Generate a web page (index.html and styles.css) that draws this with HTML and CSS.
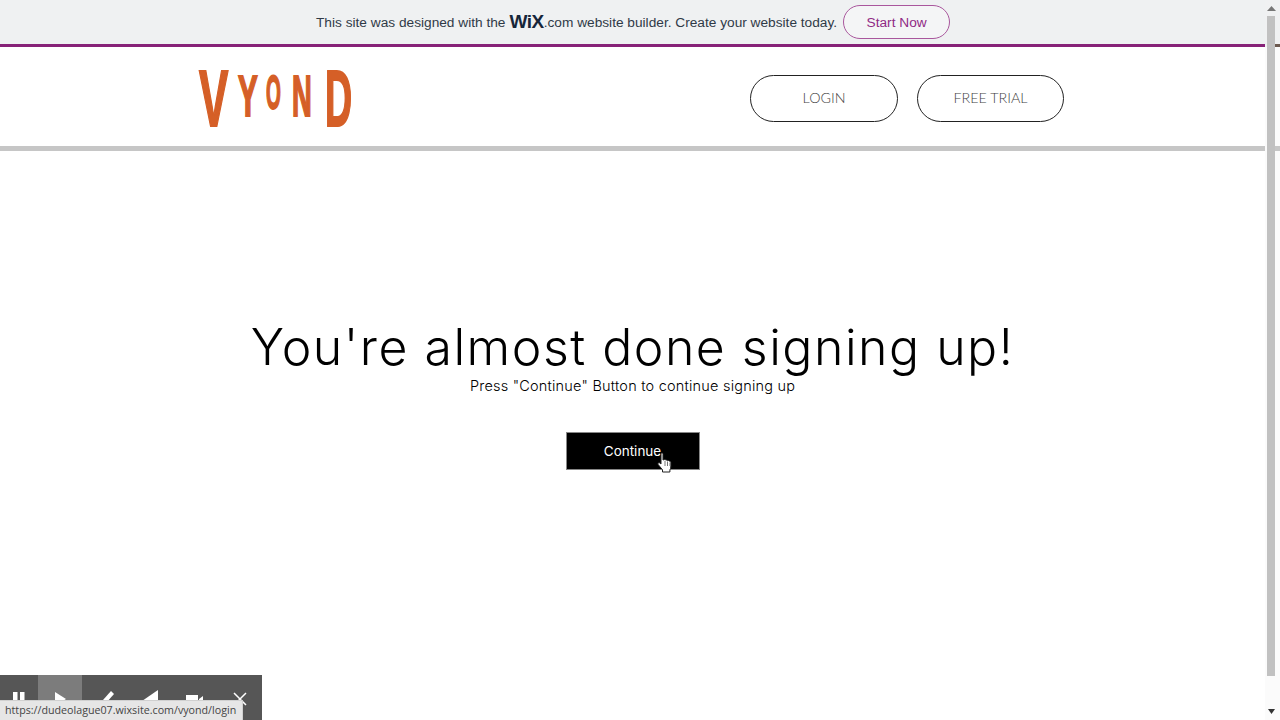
FILE: index.html
```html
<!DOCTYPE html>
<html lang="en">
<head>
    <meta charset="UTF-8">
    <meta name="viewport" content="width=device-width, initial-scale=1.0">
    <title>Vyond Login</title>
    <link rel="stylesheet" href="styles.css">
</head>
<body>
    <div class="page">
        <div class="wix-bar">
            <span>This site was designed with the</span>
            <b class="wix-logo">WiX</b><span class="wix-com">.com website builder. Create your website today.</span>
            <a class="start-btn">Start Now</a>
        </div>
        <header class="site-header">
            <div class="logo">
                <span class="logo-letter logo-v">V</span>
                <span class="logo-letter logo-y">Y</span>
                <span class="logo-letter logo-o">O</span>
                <span class="logo-letter logo-n">N</span>
                <span class="logo-letter logo-d">D</span>
            </div>
            <nav class="nav">
                <a class="pill pill-login">LOGIN</a>
                <a class="pill pill-trial">FREE TRIAL</a>
            </nav>
        </header>
        <main class="content">
            <h1>You're almost done signing up!</h1>
            <p>Press "Continue" Button to continue signing up</p>
            <a class="continue-btn">Continue
                <svg class="hand" width="16" height="21" viewBox="0 0 16 21">
                    <path d="M4 1.500c.9-.9 2-.4 2 .8V8l1.200-.4c.8-.3 1.500 0 1.700.5.700-.3 1.500-.1 1.800.5.700-.3 1.500 0 1.800.6.700-.1 1.300.3 1.300 1.100v4.700c0 1.200-.4 2-.9 2.800V20H5.500v-2.200L1.200 12.600c-.9-1.200.5-2.500 1.600-1.600L4 12V1.500z" fill="#fff" stroke="#222" stroke-width="1"/>
                    <path d="M8 9v5M10.500 9.500V14M13 10.500V14" stroke="#777" stroke-width="1" fill="none"/>
                </svg>
            </a>
        </main>
    </div>

    <div class="scrollbar">
        <span class="mark mark-purple"></span>
        <span class="mark mark-gray"></span>
        <svg class="arrow" width="9" height="5" viewBox="0 0 9 5"><path d="M4.500 0L9 5H0z" fill="#777"/></svg>
        <div class="thumb"></div>
        <svg class="arrow arrow-down" width="7" height="5" viewBox="0 0 7 5"><path d="M0 0h7L3.500 5z" fill="#333"/></svg>
    </div>

    <div class="recorder">
        <div class="tool tool-pause">
            <svg width="14" height="16" viewBox="0 0 14 16"><path d="M1 1h4.500v15H1zM8 1h4.500v15H8z" fill="#fff"/></svg>
        </div>
        <div class="tool tool-active">
            <svg width="12" height="16" viewBox="0 0 12 16"><path d="M1 1l11 7-11 7z" fill="#fff"/></svg>
        </div>
        <div class="tool tool-pencil">
            <svg width="14" height="16" viewBox="0 0 14 16"><path d="M11 0l3 3-8 9-4 1 1-4z" fill="#fff"/></svg>
        </div>
        <div class="tool tool-horn">
            <svg width="19" height="16" viewBox="0 0 19 16"><path d="M18 0v16H2v-5z" fill="#fff"/></svg>
        </div>
        <div class="tool tool-camera">
            <svg width="18" height="14" viewBox="0 0 18 14"><path d="M0 1h12v13H0zM13 5l4-3v12h-4z" fill="#fff"/></svg>
        </div>
        <div class="tool tool-close">
            <svg width="14" height="14" viewBox="0 0 14 14"><path d="M1 1l12 12M13 1L1 13" stroke="#fff" stroke-width="1.500"/></svg>
        </div>
        <div class="status-link">https://dudeolague07.wixsite.com/vyond/login</div>
    </div>
</body>
</html>
```

FILE: styles.css
```css
html, body {
    margin: 0;
    height: 100%;
    overflow: hidden;
}
body {
    font-family: "Liberation Sans", Arial, sans-serif;
    background-color: white;
    display: flex;
}
.page {
    width: 1265px;
    flex: none;
}
.wix-bar {
    height: 44px;
    background-color: #eff1f2;
    border-bottom: 3px solid #872278;
    display: flex;
    align-items: center;
    padding-left: 316px;
    font-size: 13.700px;
    color: #2f3a47;
}
.wix-bar > span:first-child {
    margin-right: 4px;
}
.wix-logo {
    font-size: 19px;
    font-weight: bold;
    color: #16263a;
    letter-spacing: -0.500px;
}
.start-btn {
    margin-left: 6px;
    width: 105px;
    height: 32px;
    border: 1px solid #a9579d;
    border-radius: 17px;
    display: flex;
    align-items: center;
    justify-content: center;
    color: #902a85;
    font-size: 13.700px;
    background-color: #f4f5f6;
}
.site-header {
    height: 99px;
    border-bottom: 5px solid #c6c6c6;
    display: flex;
    align-items: flex-start;
    justify-content: space-between;
    padding: 0 201px 0 199px;
}
.logo {
    display: flex;
    height: 80px;
    margin-top: 12px;
    color: #d55f27;
    font-weight: bold;
    -webkit-text-stroke: 2px #d55f27;
}
.logo-letter {
    display: block;
    transform-origin: left top;
    line-height: 1;
}
.logo-v {
    font-size: 80px;
    width: 39px;
    transform: scaleX(0.550);
}
.logo-y {
    font-size: 57px;
    width: 28px;
    margin-top: 9px;
    transform: scaleX(0.520);
}
.logo-o {
    font-size: 49px;
    width: 26px;
    margin-top: 9px;
    transform: scaleX(0.390);
}
.logo-n {
    font-size: 57px;
    width: 33px;
    margin-top: 9px;
    transform: scaleX(0.480);
}
.logo-d {
    font-size: 80px;
    width: 27px;
    transform: scaleX(0.470);
}
.nav {
    display: flex;
    gap: 19px;
    margin-top: 28px;
}
.pill {
    height: 43px;
    padding-bottom: 2px;
    border: 1px solid #222;
    border-radius: 24px;
    display: flex;
    align-items: center;
    justify-content: center;
    font-family: Lato, sans-serif;
    font-size: 14.300px;
    font-weight: 300;
    color: #444;
}
.pill-login {
    width: 146px;
}
.pill-trial {
    width: 145px;
}
.content {
    display: flex;
    flex-direction: column;
    align-items: center;
    padding-top: 167px;
}
.content h1 {
    margin: 0;
    font-family: Inter, sans-serif;
    font-size: 50px;
    font-weight: 300;
    line-height: 58px;
    letter-spacing: 1.500px;
    color: #000;
}
.content p {
    margin: 0;
    font-family: Inter, sans-serif;
    font-size: 14.500px;
    font-weight: 300;
    line-height: 20px;
    letter-spacing: 0.200px;
    color: #000;
}
.continue-btn {
    position: relative;
    margin-top: 36px;
    width: 132px;
    height: 36px;
    background-color: #000;
    border: 1px solid #888;
    display: flex;
    align-items: center;
    justify-content: center;
    color: white;
    font-family: Inter, sans-serif;
    font-size: 13.500px;
}
.hand {
    position: absolute;
    left: 90px;
    top: 19px;
}
.scrollbar {
    flex: 1;
    background: linear-gradient(#f0f1f2 47px, #fbfbfb 47px);
    display: flex;
    flex-direction: column;
    align-items: flex-start;
    padding-left: 2px;
    height: 720px;
    position: relative;
}
.mark {
    position: absolute;
    right: 0;
    width: 5px;
}
.mark-purple {
    top: 44px;
    height: 3px;
    background-color: #6d5a50;
}
.mark-gray {
    top: 146px;
    height: 5px;
    background-color: #c6c6c6;
}
.arrow {
    margin-top: 6px;
}
.thumb {
    margin-top: 5px;
    width: 8px;
    height: 660px;
    background-color: #c1c1c1;
}
.arrow-down {
    margin-top: 33px;
    margin-left: 1px;
}
.recorder {
    position: fixed;
    left: 0;
    bottom: 0;
    width: 262px;
    height: 45px;
    background-color: #565656;
    display: flex;
    align-items: flex-start;
    overflow: hidden;
}
.tool {
    width: 44px;
    height: 45px;
    display: flex;
    justify-content: center;
    padding-top: 16px;
    box-sizing: border-box;
}
.tool-pause {
    width: 38px;
}
.tool-active {
    background-color: #7c7c7c;
}
.tool-pencil svg {
    margin-left: 6px;
}
.tool-horn svg {
    margin-left: 2px;
    margin-top: -1px;
}
.tool-camera svg {
    margin-left: 6px;
    margin-top: 3px;
}
.tool-close svg {
    margin-left: 8px;
    margin-top: 1px;
}
.status-link {
    position: absolute;
    left: 0;
    bottom: 0;
    width: 243px;
    height: 20px;
    box-sizing: border-box;
    background-color: #e6e6e6;
    border-top: 1px solid #d0d0d0;
    border-right: 1px solid #d0d0d0;
    padding-left: 5px;
    font-family: "Open Sans", sans-serif;
    font-size: 10.700px;
    line-height: 19px;
    color: #444;
    white-space: nowrap;
}
```
